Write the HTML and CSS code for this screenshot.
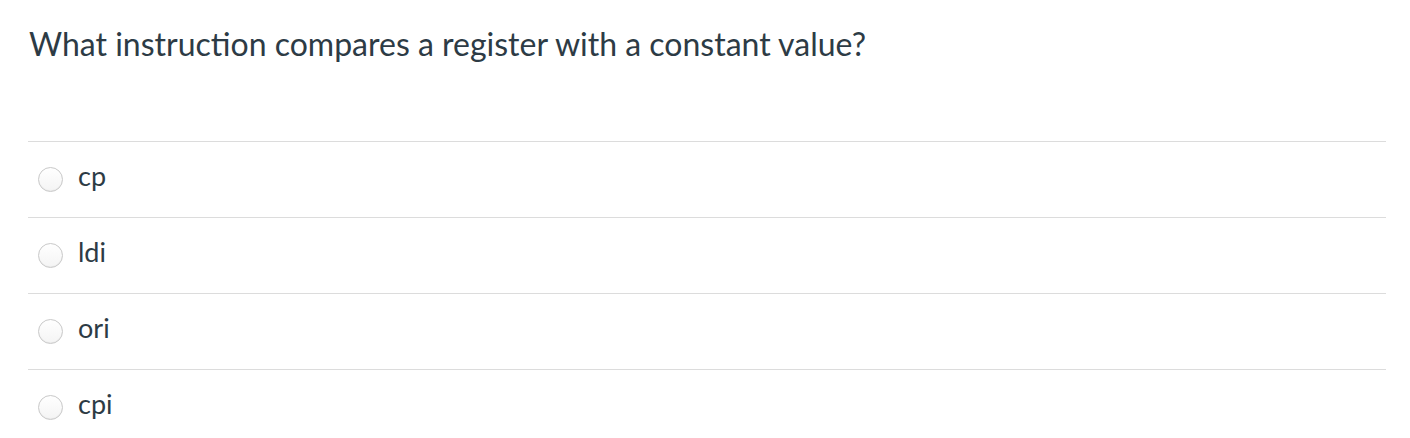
FILE: index.html
```html
<!DOCTYPE html>
<html>
<head>
<meta charset="utf-8">
<link rel="stylesheet" href="styles.css">
</head>
<body>
<div class="question">
  <div class="question-text">What instruction compares a register with a constant value?</div>
  <div class="answers">
    <label class="answer"><span class="radio"></span><span class="answer-text">cp</span></label>
    <label class="answer"><span class="radio"></span><span class="answer-text">ldi</span></label>
    <label class="answer"><span class="radio"></span><span class="answer-text">ori</span></label>
    <label class="answer"><span class="radio"></span><span class="answer-text">cpi</span></label>
  </div>
</div>
</body>
</html>
```
FILE: styles.css
```css
html, body {
  margin: 0;
  padding: 0;
  background: #ffffff;
}
body {
  font-family: Lato, "Open Sans", sans-serif;
  color: #2d3b45;
}
.question {
  padding: 25px 24px 0 28px;
}
.question-text {
  font-size: 32px;
  line-height: 38px;
  margin-left: 1px;
}
.answers {
  margin-top: 78px;
}
.answer {
  display: flex;
  align-items: center;
  height: 75px;
  border-top: 1px solid #dcdcdc;
}
.radio {
  box-sizing: border-box;
  width: 25px;
  height: 25px;
  margin-left: 10px;
  border-radius: 50%;
  border: 1px solid #c9c9c9;
  background: linear-gradient(#ffffff, #f4f4f4);
  box-shadow: inset 0 -1px 1px rgba(0,0,0,0.04);
}
.answer-text {
  margin-left: 15px;
  margin-bottom: 8px;
  font-size: 27px;
  line-height: 32px;
}
```
